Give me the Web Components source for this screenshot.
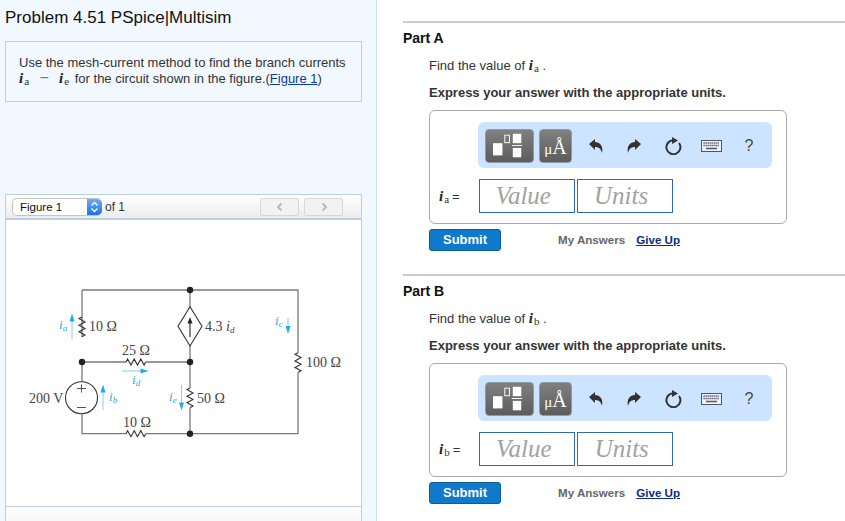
<!DOCTYPE html>
<html><head><meta charset="utf-8">
<style>
html,body{margin:0;padding:0;background:#fff}
body{font-family:"Liberation Sans",Arial,sans-serif;width:845px;height:521px;overflow:hidden}
</style></head>
<body>
<problem-page>
  <left-column slot="left">
    <problem-title>Problem 4.51 PSpice|Multisim</problem-title>
    <instruction-box>Use the mesh-current method to find the branch currents<div style="margin-top:-1px"><math-var sub="a"></math-var><span style="display:inline-block;width:30px;text-align:center;color:#777;font-size:16px;line-height:14px">−</span><math-var sub="e"></math-var><span style="margin-left:2px"> for the circuit shown in the figure.(<a href="#" style="color:#0a3a9c">Figure 1</a>)</span></div></instruction-box>
    <figure-panel><circuit-diagram></circuit-diagram></figure-panel>
  </left-column>
  <part-section slot="right" name="Part A" sub="a"></part-section>
  <part-section slot="right" name="Part B" sub="b"></part-section>
</problem-page>
<script>
function def(name, html){
  customElements.define(name, class extends HTMLElement{
    connectedCallback(){
      if(this.shadowRoot) return;
      const r=this.attachShadow({mode:'open'});
      r.innerHTML = typeof html==='function'?html(this):html;
    }
  });
}
def('problem-page',`<style>
:host{display:grid;grid-template-columns:377px 468px;height:521px;overflow:hidden}
.l{background:#f2f8ff;border-right:1px solid #cfe0f2;box-sizing:border-box;height:521px;overflow:hidden}
.r{padding:21px 0 0 26px;height:500px;overflow:hidden}
</style><div class="l"><slot name="left"></slot></div><div class="r"><slot name="right"></slot></div>`);
def('left-column',`<style>:host{display:block;padding:0 14px 0 5px}</style><slot></slot>`);
def('problem-title',`<style>:host{display:block;font-size:17px;line-height:20px;padding-top:8px;color:#111;margin-bottom:13px;white-space:nowrap}</style><slot></slot>`);
def('instruction-box',`<style>:host{display:block;box-sizing:border-box;height:61px;border:1px solid #bdd0e2;padding:13px 13px 0;font-size:13px;line-height:16px;color:#333;white-space:nowrap}</style><slot></slot>`);
def('math-var',h=>`<style>:host{display:inline-block;font-family:"Liberation Serif",serif;white-space:nowrap;color:#222}
i{font-size:15px;font-weight:bold}
sub{font-size:11px;vertical-align:-2px;line-height:0;margin-left:1px;color:#333}</style><i>i</i><sub>${h.getAttribute('sub')}</sub>`);
def('figure-panel',`<style>:host{display:block;box-sizing:border-box;margin-top:92px;height:400px;border:1px solid #bdd0e2;background:#fff}
.bar{box-sizing:border-box;height:25px;border-bottom:2px solid #bdd0e2;background:linear-gradient(#fff,#ececec);display:flex;align-items:center;padding:1px 18px 0 6px;font-size:12px;color:#333}
.sel{box-sizing:border-box;width:90px;height:18px;border:1px solid #c4c4c4;border-radius:5px;background:#fff;display:flex;align-items:center;justify-content:space-between;padding-left:7px;color:#111;overflow:hidden;border-right:0;font-size:11.500px}
.arr{width:15px;height:18px;background:linear-gradient(#6fb0f7,#1a6fe8);display:flex;align-items:center;justify-content:center}
.of{margin-left:3px;flex:1}
.nav{box-sizing:border-box;width:39px;height:18px;border:1px solid #d8d8d8;border-radius:2px;margin-left:5px;display:flex;align-items:center;justify-content:center;background:#f2f2f2}
.c{height:286px}
.foot{border-top:1px solid #bdd0e2;height:40px;background:linear-gradient(#fff,#ececec)}
</style><div class="bar"><div class="sel">Figure 1<div class="arr"><svg width="9" height="12" viewBox="0 0 9 12"><path d="M1.500 4.500 4.500 1.500 7.500 4.500M1.500 7.500 4.500 10.500 7.500 7.500" fill="none" stroke="#fff" stroke-width="1.400"/></svg></div></div><span class="of">of 1</span>
<div class="nav"><svg width="8" height="10" viewBox="0 0 8 10"><path d="M5.500 1.500 2 5l3.500 3.500" fill="none" stroke="#bbb" stroke-width="2"/></svg></div>
<div class="nav"><svg width="8" height="10" viewBox="0 0 8 10"><path d="M2.500 1.500 6 5 2.500 8.500" fill="none" stroke="#bbb" stroke-width="2"/></svg></div></div>
<div class="c"><slot></slot></div><div class="foot"></div>`);
const zigV=(x,y)=>`M${x} ${y}l-3 1.600 6 3.300-6 3.300 6 3.300-6 3.300 6 3.300-3 1.600`;
const zigH=(x,y)=>`M${x} ${y}l1.600 -3 3.300 6 3.300-6 3.300 6 3.300-6 3.300 6 1.600-3`;
def('circuit-diagram',`<style>:host{display:block;height:286px}svg{display:block}
text{font-family:"Liberation Serif",serif;font-size:14px;fill:#444}
.c{fill:#29abe2;font-style:italic;font-size:13px}
.s{font-size:9px}
.w{fill:none;stroke:#7a7a7a;stroke-width:1.300}
.z{fill:none;stroke:#333;stroke-width:1.100}
.a{fill:none;stroke:#7fd0f0;stroke-width:1}
.h{fill:#1caee6}
.n{fill:#222}
</style>
<svg width="355" height="286" viewBox="6 220 355 286">
<path class="w" d="M82 290H298V352.700M298 372.700V433.700H190M190 433.700H146M126 433.700H82V414M82 382V362M82 337V317M82 317V290M82 362H126M146 362H190M190 290V306.700M190 346V388M190 408V433.700"/>
<path class="z" d="${zigV(82,317)}"/><path class="z" d="${zigV(190,388)}"/><path class="z" d="${zigV(298,352.7)}"/>
<path class="z" d="${zigH(126,362)}"/><path class="z" d="${zigH(126,433.7)}"/>
<circle class="n" cx="190" cy="290" r="3.200"/><circle class="n" cx="82" cy="362" r="3.200"/><circle class="n" cx="190" cy="362" r="3.200"/><circle class="n" cx="190" cy="433.700" r="3.200"/>
<circle cx="81.500" cy="397.700" r="16" fill="#fff" stroke="#333" stroke-width="1.100"/>
<path d="M77 388.500h9M81.500 384.500v8M77 407.500h9" fill="none" stroke="#555" stroke-width="1"/>
<path d="M190 306.700 202 326.300 190 346 178 326.300Z" fill="#fff" stroke="#333" stroke-width="1.100"/>
<path d="M190 337V322" stroke="#333" stroke-width="1.200"/><path d="M190 317l-2.500 6.500h5Z" fill="#222"/>
<path class="a" d="M72 320V339M103 391V410M181.500 385V404M288 318V328M122 371H142"/>
<path class="h" d="M72 313.500l-2.500 8h5ZM103 384.500l-2.500 8h5ZM181.500 410.500l-2.500-8h5ZM288 334l-2.500-8h5ZM148.500 371l-8-2.500v5Z"/>
<text x="89" y="331">10 Ω</text><text x="122" y="355">25 Ω</text><text x="123" y="427">10 Ω</text>
<text x="205" y="331">4.3 <tspan font-style="italic">i</tspan><tspan class="s" font-style="italic" dy="2">d</tspan></text>
<text x="306" y="367">100 Ω</text><text x="197" y="403">50 Ω</text><text x="29" y="403">200 V</text>
<text class="c" x="59" y="329">i<tspan class="s" dy="2">a</tspan></text>
<text class="c" x="132" y="384">i<tspan class="s" dy="2">d</tspan></text>
<text class="c" x="109" y="401">i<tspan class="s" dy="2">b</tspan></text>
<text class="c" x="169" y="401">i<tspan class="s" dy="2">e</tspan></text>
<text class="c" x="275" y="325">i<tspan class="s" dy="2">c</tspan></text>
</svg>`);
def('math-toolbar',`<style>:host{display:flex;box-sizing:border-box;width:294px;height:46px;margin-left:48px;background:#cce4ff;border-radius:6px;align-items:center;padding:0 0 0 7px;border-top:1px solid #d6e4f2}
.b{box-sizing:border-box;height:34px;border-radius:4px;background:linear-gradient(#808080,#5c5c5c);border:1px solid #8a9aa8;display:block;overflow:hidden}
.t{display:flex;align-items:flex-end;justify-content:center;width:33px;margin-left:5px;color:#fff;font-family:"Liberation Serif",serif;padding-bottom:5px}
.t .u{font-size:15px;line-height:15px}.t .A{font-size:20px;line-height:20px}
.tools{display:flex;align-items:center;margin-left:16px}
.q{font-size:16px;color:#444;margin-left:19px;width:16px;text-align:center}
</style>
<svg class="b" width="49" height="34" viewBox="0 0 49 34"><rect x="7" y="14" width="10" height="13" fill="#fff"/><rect x="19.500" y="5.500" width="5" height="8" fill="none" stroke="#fff"/><rect x="28" y="4" width="9" height="10" fill="#fff"/><rect x="27" y="16" width="11" height="1" fill="#fff"/><rect x="28" y="19" width="9" height="10" fill="#fff"/></svg>
<div class="b t"><span class="u">μ</span><span class="A">Å</span></div>
<div class="tools">
<svg width="16" height="16" viewBox="0 0 16 16"><path d="M1 6 7 1V4C12 4 15.500 8 14 15 13 11 11 9 7 9V12Z" fill="#333"/></svg>
<svg width="16" height="16" viewBox="0 0 16 16" style="margin-left:22px"><path d="M15 6 9 1V4C4 4 .5 8 2 15 3 11 5 9 9 9V12Z" fill="#333"/></svg>
<svg width="18" height="18" viewBox="0 0 18 18" style="margin-left:22px"><path d="M9.500 3.200A7 7 0 1 0 15 6" fill="none" stroke="#333" stroke-width="2"/><path d="M8 0 14 3.500 8 7Z" fill="#333"/></svg>
<svg width="21" height="12" viewBox="0 0 21 12" style="margin-left:19px"><rect x=".5" y=".5" width="20" height="11" fill="#eef4fa" stroke="#555"/><path d="M2.500 3h16M2.500 5.500h16" stroke="#556" stroke-width="1.300" stroke-dasharray="1.300 .7"/><path d="M5 8.500h11" stroke="#556" stroke-width="1.500"/></svg>
<span class="q">?</span>
</div>`);
def('answer-row',h=>`<style>:host{display:flex;align-items:center;margin-top:11px;padding-left:9px;font-size:13px;color:#333}
.in{box-sizing:border-box;width:96px;height:34px;border:1px solid #2f68c4;display:flex;align-items:center;justify-content:center;font:italic 25px "Liberation Serif",serif;color:#a2a2a2;margin-right:2px;background:#fff;padding-right:7px}
.lab{margin-right:19px;white-space:nowrap}.eq{margin-left:3px}</style>
<span class="lab"><math-var sub="${h.getAttribute('sub')}"></math-var><span class="eq">=</span></span><div class="in">Value</div><div class="in">Units</div>`);
def('part-section',h=>{const s=h.getAttribute('sub');return `<style>:host{display:block;height:253px;color:#222;font-size:13px}
.rule{height:2px;background:#ccc}
h3{margin:7px 0 0;font-size:14px;line-height:16px;color:#111}
.body{margin-left:26px}
.q{margin-top:11px;line-height:16px;color:#333}
.x{margin-top:11px;line-height:16px;font-weight:bold;color:#333}
.box{box-sizing:border-box;width:358px;height:114px;border:1px solid #aaa;border-radius:6px;margin-top:9px;padding-top:11px}
.act{display:flex;align-items:center;margin-top:5px;font-size:11.600px;font-weight:bold}
button{box-sizing:border-box;width:72px;height:22px;background:#0f79cc;color:#fff;border:1px solid #0d5c98;border-radius:3px;font:bold 13px "Liberation Sans",sans-serif;padding:0 0 2px}
.my{margin-left:57px;color:#666;margin-bottom:2px}
a{margin-left:11px;color:#0a2a8c;margin-bottom:2px}
</style><div class="rule"></div><h3>${h.getAttribute('name')}</h3>
<div class="body"><div class="q">Find the value of <math-var sub="${s}"></math-var> .</div>
<div class="x">Express your answer with the appropriate units.</div>
<div class="box"><math-toolbar></math-toolbar><answer-row sub="${s}"></answer-row></div>
<div class="act"><button>Submit</button><span class="my">My Answers</span><a href="#">Give Up</a></div></div>`});
</script>
</body></html>
